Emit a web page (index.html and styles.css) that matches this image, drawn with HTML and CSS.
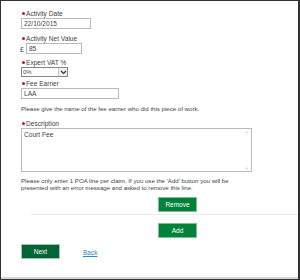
FILE: index.html
```html
<!DOCTYPE html>
<html>

<head>
    <meta charset="UTF-8">
    <meta name="viewport" content="width=device-width, initial-scale=1">
    <title>Activity</title>
    <link rel="stylesheet" href="styles.css">
</head>

<body>
<div id="ramme">
<form id="aktivitet">

    <div class="felt foerste">
        <label class="krav">Activity Date</label>
        <input type="text" class="dato" value="22/10/2015">
    </div>

    <div class="felt">
        <label class="krav">Activity Net Value</label>
        <div class="pris"><span>£</span><input type="text" class="beloeb" value="85"></div>
    </div>

    <div class="felt moms">
        <label class="krav">Expert VAT %</label>
        <div class="vaelg"><span>0%</span><span class="pil"><svg width="7" height="5" viewBox="0 0 7 5"><path d="M1 1 L3.5 3.5 L6 1" fill="none" stroke="#333" stroke-width="1.2"/></svg></span></div>
    </div>

    <div class="felt kort">
        <label class="krav">Fee Earner</label>
        <input type="text" class="navn" value="LAA">
    </div>

    <p class="hjaelp">Please give the name of the fee earner who did this piece of work.</p>

    <div class="felt beskrivelse">
        <label class="krav">Description</label>
        <div class="tekstfelt">
            <span>Court Fee</span>
            <div class="rulle"><span>&#8963;</span><span>&#8964;</span></div>
        </div>
    </div>

    <p class="besked">Please only enter 1 POA line per claim. If you use the 'Add' button you will be presented with an error message and asked to remove this line.</p>

    <div class="midt"><button type="button" class="knap">Remove</button></div>
    <div class="streg"></div>
    <div class="midt"><button type="button" class="knap">Add</button></div>

    <div class="bund">
        <button type="button" class="knap naeste">Next</button>
        <a href="#">Back</a>
    </div>

</form>
</div>
</body>

</html>
```

FILE: styles.css
```css
body {
    margin: 0;
    font-family: "Liberation Sans", Arial, sans-serif;
    color: #444;
}

#ramme {
    box-sizing: border-box;
    height: 280px;
    width: 300px;
    border-top: 1px solid #333;
    border-left: 1px solid #333;
    border-right: 2px solid #333;
    border-bottom: 1px solid #333;
    box-shadow: inset 0 -2px 0 #d6d6d6;
    background-color: white;
}

#aktivitet {
    padding: 9px 0 0 20px;
    font-size: 7px;
    line-height: 8px;
}

.felt {
    margin-bottom: 5px;
}

.foerste {
    margin-bottom: 6px;
}

.moms {
    margin-bottom: 3px;
}

.kort {
    margin-bottom: 6px;
}

.beskrivelse {
    margin-bottom: 5px;
}

.felt label {
    display: block;
    font-size: 6.6px;
    line-height: 8px;
}

.krav::before {
    content: "";
    display: inline-block;
    width: 3px;
    height: 3px;
    border-radius: 50%;
    background-color: #c8102e;
    margin-right: 1px;
    margin-left: 1px;
    vertical-align: 1px;
}

input {
    display: block;
    box-sizing: border-box;
    height: 11px;
    border: 1px solid #bbb;
    font-family: "Liberation Sans", Arial, sans-serif;
    font-size: 6.6px;
    color: #444;
    padding: 0 2px;
    margin: 0;
}

.dato {
    width: 70px;
}

.pris {
    display: flex;
    align-items: center;
    margin-left: -1px;
}

.pris span {
    font-size: 7px;
    margin-right: 2px;
    margin-top: 3px;
}

.beloeb {
    width: 56px;
}

.navn {
    width: 98px;
}

.vaelg {
    box-sizing: border-box;
    display: flex;
    justify-content: space-between;
    align-items: center;
    width: 47px;
    height: 10px;
    border: 1px solid #888;
    font-size: 6px;
    padding-left: 1px;
}

.pil {
    display: flex;
    align-items: center;
    justify-content: center;
    width: 8px;
    height: 8px;
    border-left: 1px solid #ccc;
    background-color: #f0f0f0;
}

.hjaelp {
    font-size: 6.1px;
    margin: 0 0 7px 0;
    line-height: 8px;
}

.tekstfelt {
    box-sizing: border-box;
    display: flex;
    justify-content: space-between;
    width: 231px;
    height: 44px;
    border: 1px solid #bbb;
    font-size: 6.6px;
    padding: 2px 1px 1px 2px;
}

.rulle {
    display: flex;
    flex-direction: column;
    justify-content: space-between;
    color: #aaa;
    font-size: 6px;
    line-height: 6px;
    width: 7px;
    text-align: center;
}

.besked {
    font-size: 6.1px;
    line-height: 7px;
    width: 225px;
    margin: 0 0 6px 0;
}

.midt {
    padding-left: 137px;
}

.knap {
    display: block;
    box-sizing: border-box;
    width: 39px;
    height: 15px;
    background-color: #00823b;
    border: 1px solid #7cc196;
    color: white;
    font-family: "Liberation Sans", Arial, sans-serif;
    font-size: 6.5px;
    padding: 0;
}

.streg {
    height: 1px;
    background-color: #e6ebe8;
    margin: 2px 0 8px 10px;
}

.bund {
    display: flex;
    align-items: center;
    margin-top: 6px;
}

.naeste {
    background-color: #006435;
    border-color: #9fc7ad;
}

.bund a {
    font-size: 6.5px;
    color: #2b8cc4;
    margin-left: 23px;
    margin-top: 2px;
}
```
